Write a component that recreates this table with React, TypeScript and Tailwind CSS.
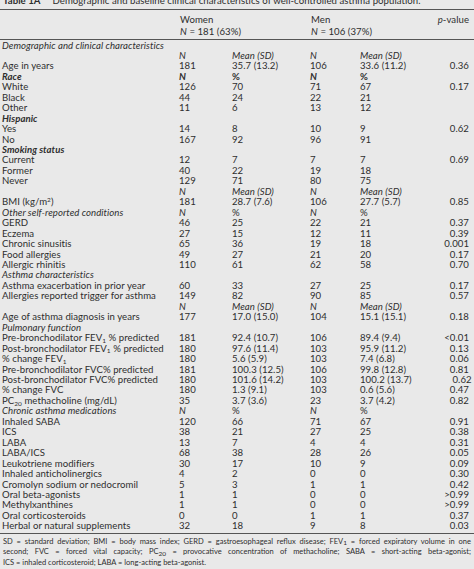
type Row = {
  label: React.ReactNode;
  kind?: "sub" | "group";
  wn?: React.ReactNode;
  wm?: React.ReactNode;
  mn?: React.ReactNode;
  mm?: React.ReactNode;
  p?: string;
};

const I = ({ children }: { children: React.ReactNode }) => <span className="italic">{children}</span>;
const BI = ({ children }: { children: React.ReactNode }) => <span className="italic font-bold">{children}</span>;
const Sub = ({ children }: { children: React.ReactNode }) => <sub className="text-[6.5px]">{children}</sub>;

const nMean = { wn: <I>N</I>, wm: <I>Mean (SD)</I>, mn: <I>N</I>, mm: <I>Mean (SD)</I> };
const nPct = { wn: <I>N</I>, wm: "%", mn: <I>N</I>, mm: "%" };
const nPctBold = { wn: <BI>N</BI>, wm: <b>%</b>, mn: <BI>N</BI>, mm: <b>%</b> };

const rows: Row[] = [
  { label: "Demographic and clinical characteristics", kind: "sub" },
  { label: "", ...nMean },
  { label: "Age in years", wn: "181", wm: "35.7 (13.2)", mn: "106", mm: "33.6 (11.2)", p: "0.36" },
  { label: "Race", kind: "group", ...nPctBold },
  { label: "White", wn: "126", wm: "70", mn: "71", mm: "67", p: "0.17" },
  { label: "Black", wn: "44", wm: "24", mn: "22", mm: "21" },
  { label: "Other", wn: "11", wm: "6", mn: "13", mm: "12" },
  { label: "Hispanic", kind: "group" },
  { label: "Yes", wn: "14", wm: "8", mn: "10", mm: "9", p: "0.62" },
  { label: "No", wn: "167", wm: "92", mn: "96", mm: "91" },
  { label: "Smoking status", kind: "group" },
  { label: "Current", wn: "12", wm: "7", mn: "7", mm: "7", p: "0.69" },
  { label: "Former", wn: "40", wm: "22", mn: "19", mm: "18" },
  { label: "Never", wn: "129", wm: "71", mn: "80", mm: "75" },
  { label: "", ...nMean },
  { label: <>BMI (kg/m<sup className="text-[6.5px]">2</sup>)</>, wn: "181", wm: "28.7 (7.6)", mn: "106", mm: "27.7 (5.7)", p: "0.85" },
  { label: "Other self-reported conditions", kind: "sub", ...nPct },
  { label: "GERD", wn: "46", wm: "25", mn: "22", mm: "21", p: "0.37" },
  { label: "Eczema", wn: "27", wm: "15", mn: "12", mm: "11", p: "0.39" },
  { label: "Chronic sinusitis", wn: "65", wm: "36", mn: "19", mm: "18", p: "0.001" },
  { label: "Food allergies", wn: "49", wm: "27", mn: "21", mm: "20", p: "0.17" },
  { label: "Allergic rhinitis", wn: "110", wm: "61", mn: "62", mm: "58", p: "0.70" },
  { label: "Asthma characteristics", kind: "sub" },
  { label: "Asthma exacerbation in prior year", wn: "60", wm: "33", mn: "27", mm: "25", p: "0.17" },
  { label: "Allergies reported trigger for asthma", wn: "149", wm: "82", mn: "90", mm: "85", p: "0.57" },
  { label: "", ...nMean },
  { label: "Age of asthma diagnosis in years", wn: "177", wm: "17.0 (15.0)", mn: "104", mm: "15.1 (15.1)", p: "0.18" },
  { label: "Pulmonary function", kind: "sub" },
  { label: <>Pre-bronchodilator FEV<Sub>1</Sub> % predicted</>, wn: "181", wm: "92.4 (10.7)", mn: "106", mm: "89.4 (9.4)", p: "<0.01" },
  { label: <>Post-bronchodilator FEV<Sub>1</Sub> % predicted</>, wn: "180", wm: "97.6 (11.4)", mn: "103", mm: "95.9 (11.2)", p: "0.13" },
  { label: <>% change FEV<Sub>1</Sub></>, wn: "180", wm: "5.6 (5.9)", mn: "103", mm: "7.4 (6.8)", p: "0.06" },
  { label: "Pre-bronchodilator FVC% predicted", wn: "181", wm: "100.3 (12.5)", mn: "106", mm: "99.8 (12.8)", p: "0.81" },
  { label: "Post-bronchodilator FVC% predicted", wn: "180", wm: "101.6 (14.2)", mn: "103", mm: "100.2 (13.7)", p: "0.62" },
  { label: "% change FVC", wn: "180", wm: "1.3 (9.1)", mn: "103", mm: "0.6 (5.6)", p: "0.47" },
  { label: <>PC<Sub>20</Sub> methacholine (mg/dL)</>, wn: "35", wm: "3.7 (3.6)", mn: "23", mm: "3.7 (4.2)", p: "0.82" },
  { label: "Chronic asthma medications", kind: "sub", ...nPct },
  { label: "Inhaled SABA", wn: "120", wm: "66", mn: "71", mm: "67", p: "0.91" },
  { label: "ICS", wn: "38", wm: "21", mn: "27", mm: "25", p: "0.38" },
  { label: "LABA", wn: "13", wm: "7", mn: "4", mm: "4", p: "0.31" },
  { label: "LABA/ICS", wn: "68", wm: "38", mn: "28", mm: "26", p: "0.05" },
  { label: "Leukotriene modifiers", wn: "30", wm: "17", mn: "10", mm: "9", p: "0.09" },
  { label: "Inhaled anticholinergics", wn: "4", wm: "2", mn: "0", mm: "0", p: "0.30" },
  { label: "Cromolyn sodium or nedocromil", wn: "5", wm: "3", mn: "1", mm: "1", p: "0.42" },
  { label: "Oral beta-agonists", wn: "1", wm: "1", mn: "0", mm: "0", p: ">0.99" },
  { label: "Methylxanthines", wn: "1", wm: "1", mn: "0", mm: "0", p: ">0.99" },
  { label: "Oral corticosteroids", wn: "0", wm: "0", mn: "1", mm: "1", p: "0.37" },
  { label: "Herbal or natural supplements", wn: "32", wm: "18", mn: "9", mm: "8", p: "0.03" },
];

const cols = "grid grid-cols-[177px_53px_78px_50px_1fr_60px]";

export default function App() {
  return (
    <div
      className="w-[474px] h-[569px] overflow-hidden bg-[#e9e9e9] text-[#2e2e2e] text-[9.6px] tracking-[0.05px]"
      style={{ fontFamily: "Lato, 'Liberation Sans', sans-serif" }}
    >
      <div className="-mt-[5px] pl-[3px] h-[14px] leading-[12px] whitespace-nowrap">
        <span className="font-bold">Table 1A</span>
        <span className="ml-[12px]">Demographic and baseline clinical characteristics of well-controlled asthma population.</span>
      </div>
      <div className="border-t-[1.5px] border-[#555]" />
      <div className={`${cols} pl-[3px] pr-[5px] pt-[4px] h-[29px] leading-[12px]`}>
        <div />
        <div className="col-span-2">
          <div>Women</div>
          <div>
            <I>N</I> = 181 (63%)
          </div>
        </div>
        <div className="col-span-2">
          <div>Men</div>
          <div>
            <I>N</I> = 106 (37%)
          </div>
        </div>
        <div className="text-right">
          <I>p</I>-value
        </div>
      </div>
      <div className="border-t border-[#555]" />
      <div className="pl-[2px] pr-[5px] pt-[0.5px]">
        {rows.map((r, i) => (
          <div key={i} className={`${cols} h-[10.46px] leading-[10.46px] whitespace-nowrap`}>
            <div className={r.kind === "group" ? "italic font-bold" : r.kind === "sub" ? "italic" : ""}>{r.label}</div>
            <div>{r.wn}</div>
            <div>{r.wm}</div>
            <div>{r.mn}</div>
            <div>{r.mm}</div>
            <div className="text-right">{r.p}</div>
          </div>
        ))}
      </div>
      <div className="mt-[1px] border-t-[1.5px] border-[#555]" />
      <div className="px-[3px] pt-[3px] text-[7.5px] leading-[10.4px] tracking-normal whitespace-nowrap">
        <div className="h-[10.4px] text-justify [text-align-last:justify]">
          SD = standard deviation; BMI = body mass index; GERD = gastroesophageal reflux disease; FEV<Sub>1</Sub> = forced
          expiratory volume in one
        </div>
        <div className="h-[10.4px] text-justify [text-align-last:justify]">
          second; FVC = forced vital capacity; PC<Sub>20</Sub> = provocative concentration of methacholine; SABA =
          short-acting beta-agonist;
        </div>
        <div className="h-[10.4px]">ICS = inhaled corticosteroid; LABA = long-acting beta-agonist.</div>
      </div>
    </div>
  );
}
